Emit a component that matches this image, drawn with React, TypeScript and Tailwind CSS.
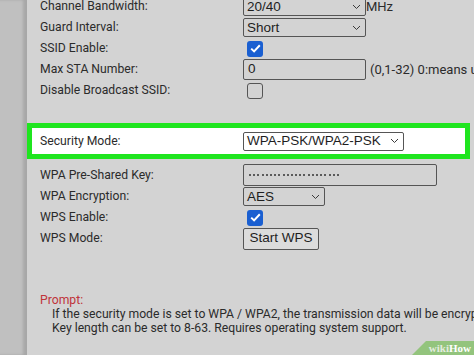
import React from "react";

const Chevron = () => (
    <svg width="9" height="6" viewBox="0 0 9 6" className="shrink-0">
        <path d="M1 1 L4.5 4.5 L8 1" fill="none" stroke="#3a3a3a" strokeWidth="1" />
    </svg>
);

const Select = ({ value, width, white }: { value: string; width: string; white?: boolean }) => (
    <div className={`${width} h-[19px] flex items-center justify-between pl-[3px] pr-[4px] border-[1.5px] border-[#555] rounded-[2px] ${white ? "bg-white" : "bg-[#d3d3d3]"}`}>
        <span className="font-['Liberation_Sans',sans-serif] text-[13.5px] leading-none text-[#1e1e1e]">{value}</span>
        <Chevron />
    </div>
);

const Checkbox = ({ checked }: { checked?: boolean }) =>
    checked ? (
        <div className="ml-[4px] w-[16px] h-[16px] rounded-[3px] bg-[#1a5fd1] flex items-center justify-center">
            <svg width="11" height="9" viewBox="0 0 11 9">
                <path d="M1.2 4.6 L4.1 7.4 L9.8 1.3" fill="none" stroke="white" strokeWidth="2" />
            </svg>
        </div>
    ) : (
        <div className="ml-[4px] w-[16px] h-[16px] rounded-[3px] border-[1.5px] border-[#555]" />
    );

const Label = ({ children }: { children: React.ReactNode }) => (
    <div className="w-[203px] shrink-0 text-[12.2px] text-[#2b2b2b]">{children}</div>
);

const Row = ({ label, children }: { label: string; children?: React.ReactNode }) => (
    <div className="flex items-center h-[21px]">
        <Label>{label}</Label>
        <div className="flex items-center gap-[2px] whitespace-nowrap">{children}</div>
    </div>
);

export default function App() {
    return (
        <div className="w-[474px] h-[355px] overflow-hidden flex bg-[#d3d3d3] font-['Roboto',sans-serif]">
            <div className="w-[27px] shrink-0 bg-[#c0c0c0] shadow-[inset_-4px_0_3px_rgba(0,0,0,0.13)]" />
            <div className="relative flex-1 min-w-0 flex flex-col overflow-hidden">
                <div className="pl-[13px] mt-[-4px] flex flex-col">
                    <Row label="Channel Bandwidth:">
                        <Select value="20/40" width="w-[123px]" />
                        <span className="text-[13px] text-[#2b2b2b] -ml-[2px]">MHz</span>
                    </Row>
                    <Row label="Guard Interval:">
                        <Select value="Short" width="w-[123px]" />
                    </Row>
                    <Row label="SSID Enable:">
                        <Checkbox checked />
                    </Row>
                    <Row label="Max STA Number:">
                        <div className="w-[123px] h-[21px] flex items-center pl-[4px] border-[1.5px] border-[#555] rounded-[2px] font-['Liberation_Sans',sans-serif] text-[13.5px] text-[#1e1e1e]">0</div>
                        <span className="ml-[2px] text-[13px] text-[#2b2b2b]">(0,1-32) 0:means unlimited</span>
                    </Row>
                    <Row label="Disable Broadcast SSID:">
                        <Checkbox />
                    </Row>
                </div>

                <div className="mt-[22px] w-[443px] h-[36px] border-[5px] border-[#1fe51f] bg-white flex items-center pl-[8px]">
                    <Label>Security Mode:</Label>
                    <Select value="WPA-PSK/WPA2-PSK" width="w-[161px]" white />
                </div>

                <div className="pl-[13px] mt-[5px] flex flex-col">
                    <div className="flex items-center h-[22px]">
                        <Label>WPA Pre-Shared Key:</Label>
                        <div className="w-[194px] h-[22px] flex items-center gap-[2.2px] pl-[5px] border-[1.5px] border-[#555] rounded-[2px]">
                            {Array.from({ length: 22 }).map((_, i) => (
                                <div key={i} className="w-[2px] h-[2px] rounded-full bg-[#333]" />
                            ))}
                        </div>
                    </div>
                    <Row label="WPA Encryption:">
                        <Select value="AES" width="w-[82px]" />
                    </Row>
                    <Row label="WPS Enable:">
                        <Checkbox checked />
                    </Row>
                    <Row label="WPS Mode:">
                        <div className="w-[76px] h-[22px] flex items-center justify-center border-[1.5px] border-[#555] rounded-[2px] bg-[#dcdcdc] font-['Liberation_Sans',sans-serif] text-[13.5px] text-[#1e1e1e]">Start WPS</div>
                    </Row>
                </div>

                <div className="pl-[13px] mt-[44px] text-[12.2px] leading-[14px] whitespace-nowrap">
                    <div className="text-[#c0343a]">Prompt:</div>
                    <div className="pl-[12px] text-[#2b2b2b]">If the security mode is set to WPA / WPA2, the transmission data will be encrypted.</div>
                    <div className="pl-[12px] text-[#2b2b2b]">Key length can be set to 8-63. Requires operating system support.</div>
                </div>

                <div className="absolute right-0 bottom-0 h-[14px] w-[62px] bg-[#93c47d] [clip-path:polygon(14px_0,100%_0,100%_100%,0_100%)] flex items-center justify-end pr-[3px] font-['Liberation_Serif',serif] font-bold text-[11px] leading-none">
                    <span className="text-[#e4ecdf]">wiki</span>
                    <span className="text-white">How</span>
                </div>
            </div>
        </div>
    );
}
